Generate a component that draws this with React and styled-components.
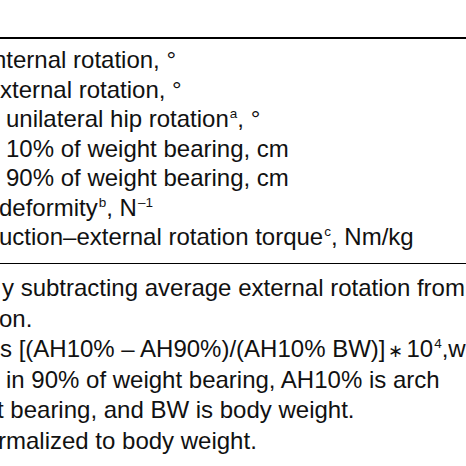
import React from 'react';
import styled, { createGlobalStyle } from 'styled-components';

const GlobalStyle = createGlobalStyle`
    html, body {
        margin: 0;
        padding: 0;
        background: #ffffff;
    }
`;

const Page = styled.div`
    width: 466px;
    height: 466px;
    overflow: hidden;
    box-sizing: border-box;
    padding-top: 37px;
    display: flex;
    flex-direction: column;
    background: #ffffff;
    color: #111111;
    font-family: 'Liberation Sans', Arial, Helvetica, sans-serif;
    font-size: 24px;
`;

const Rule = styled.div`
    flex: none;
    height: ${(p) => p.$weight}px;
    background: #000000;
`;

const Block = styled.div`
    flex: none;
    display: flex;
    flex-direction: column;
    padding: ${(p) => p.$pad};
`;

const Line = styled.div`
    height: ${(p) => p.$height}px;
    line-height: ${(p) => p.$height}px;
    white-space: nowrap;
    text-indent: ${(p) => p.$indent || 0}px;
`;

const Sup = styled.sup`
    font-size: 13.5px;
    line-height: 0;
    vertical-align: 9px;
    margin-left: 1px;
`;

const Star = styled.span`
    font-size: 18px;
    margin: 0 3px;
`;

const rows = [
    { indent: -7, text: <>nternal rotation, °</> },
    { indent: 0, text: <>xternal rotation, °</> },
    { indent: 6, text: <>unilateral hip rotation<Sup>a</Sup>, °</> },
    { indent: 6, text: <>10% of weight bearing, cm</> },
    { indent: 6, text: <>90% of weight bearing, cm</> },
    { indent: -1, text: <>deformity<Sup>b</Sup>, N<Sup>–1</Sup></> },
    { indent: -1, text: <>uction–external rotation torque<Sup>c</Sup>, Nm/kg</> },
];

const notes = [
    { indent: 2, text: <>y subtracting average external rotation from</> },
    { indent: -1, text: <>on.</> },
    {
        indent: 0,
        text: (
            <>
                s [(AH10% – AH90%)/(AH10% BW)]<Star>∗</Star>10<Sup>4</Sup>,where
            </>
        ),
    },
    { indent: 6, text: <>in 90% of weight bearing, AH10% is arch</> },
    { indent: -3, text: <>t bearing, and BW is body weight.</> },
    { indent: -2, text: <>rmalized to body weight.</> },
];

const App = () => {
    return (
        <>
            <GlobalStyle />
            <Page>
                <Rule $weight={2} />
                <Block $pad="6px 0 11px">
                    {rows.map((row, i) => (
                        <Line key={i} $height={29.5} $indent={row.indent}>
                            {row.text}
                        </Line>
                    ))}
                </Block>
                <Rule $weight={1.5} />
                <Block $pad="9px 0 0">
                    {notes.map((note, i) => (
                        <Line key={i} $height={30.5} $indent={note.indent}>
                            {note.text}
                        </Line>
                    ))}
                </Block>
            </Page>
        </>
    );
};

export default App;
